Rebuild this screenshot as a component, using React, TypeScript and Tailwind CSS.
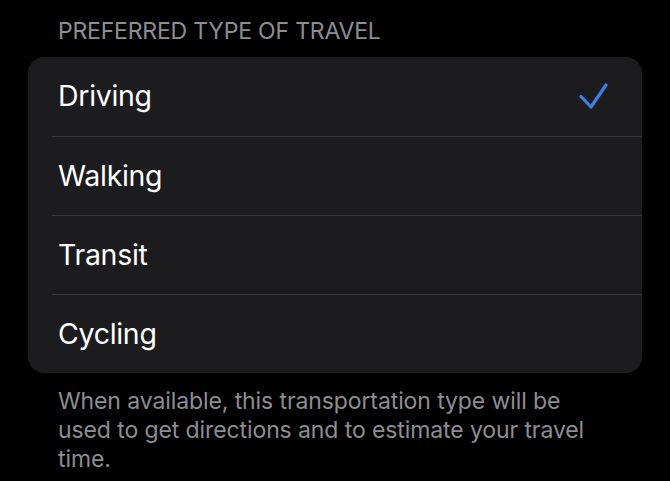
const options = ['Driving', 'Walking', 'Transit', 'Cycling'];

function CheckMark() {
  return (
    <svg width="30" height="28" viewBox="0 0 30 28" fill="none" className="text-[#3b80ea]">
      <path
        d="M2 13.5L12 24L27 2"
        stroke="currentColor"
        strokeWidth="3.2"
        strokeLinecap="round"
        strokeLinejoin="round"
      />
    </svg>
  );
}

export default function App() {
  return (
    <div
      className="min-h-screen w-full bg-black pt-[17px]"
      style={{ fontFamily: 'Inter, "Noto Sans", sans-serif' }}
    >
      <div className="pl-[58px] text-[23px] leading-[28px] uppercase tracking-[-0.2px] text-[#8d8d93]">
        Preferred Type of Travel
      </div>
      <div className="mr-[28px] ml-[28px] mt-[12px] overflow-hidden rounded-[16px] bg-[#1c1c1e]">
        {options.map((opt, i) => (
          <div key={opt} className="pl-[24px]">
            <div
              className={
                'flex h-[79px] items-center justify-between pl-[6px] pr-[33px] ' +
                (i > 0 ? 'border-t border-[#38383a]' : '')
              }
            >
              <span className="text-[28.5px] tracking-[-0.3px] text-white">{opt}</span>
              {i === 0 && <CheckMark />}
            </div>
          </div>
        ))}
      </div>
      <p className="mt-[14px] pl-[58px] pr-[67px] text-[23px] leading-[29px] tracking-[-0.1px] text-[#8d8d93]">
        When available, this transportation type will be used to get directions and to estimate
        your travel time.
      </p>
    </div>
  );
}
